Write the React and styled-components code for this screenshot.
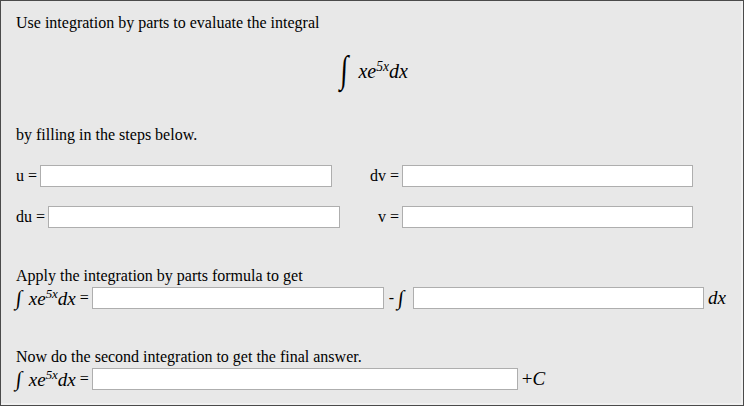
import React from "react";
import styled, { createGlobalStyle } from "styled-components";

const GlobalStyle = createGlobalStyle`
  html, body {
    margin: 0;
    padding: 0;
    background: #ffffff;
  }
  body {
    font-family: "Liberation Serif", "Times New Roman", serif;
    color: #000;
  }
`;

const Frame = styled.div`
  box-sizing: border-box;
  width: 744px;
  height: 406px;
  background: #e8e8e8;
  border: 1px solid #4a4a4a;
  box-shadow: inset -2px -2px 0 #f0f0f0;
  padding: 12px 0 0 15px;
  font-size: 16px;
`;

const Para = styled.div`
  line-height: 20px;
  margin-top: ${(p) => p.$top || 0}px;
`;

const Display = styled.div`
  display: flex;
  justify-content: center;
  align-items: center;
  gap: 9px;
  height: 44px;
  margin-top: 16px;
  padding-right: 12px;
`;

const BigIntegral = styled.span`
  font-size: 38px;
  line-height: 38px;
  display: inline-block;
  transform: scaleX(0.7) skewX(-4deg);
  margin-top: -4px;
`;

const Math = styled.span`
  font-style: italic;
  font-size: ${(p) => p.$size || 19}px;
  white-space: nowrap;
`;

const Sup = styled.sup`
  font-size: 0.68em;
  vertical-align: 0.55em;
  line-height: 0;
`;

const Grid = styled.div`
  display: flex;
  flex-direction: column;
  gap: 19px;
  margin-top: 20px;
`;

const Row = styled.div`
  display: flex;
  align-items: center;
`;

const Cell = styled.div`
  display: flex;
  align-items: center;
  width: ${(p) => p.$width}px;
  justify-content: ${(p) => (p.$right ? "flex-end" : "flex-start")};
`;

const Label = styled.span`
  margin-right: 3px;
  white-space: nowrap;
`;

const Field = styled.input`
  box-sizing: border-box;
  width: ${(p) => p.$width || 292}px;
  height: 22px;
  border: 1px solid #aeaeae;
  background: #fff;
  margin: 0;
  padding: 0 3px;
  font: inherit;
  outline: none;
`;

const Line = styled.div`
  display: flex;
  align-items: center;
  height: 22px;
  margin-top: ${(p) => p.$top || 0}px;
`;

const SmallIntegral = styled.span`
  font-style: normal;
  font-size: 21px;
  display: inline-block;
  transform: skewX(-6deg);
  margin-right: ${(p) => p.$gap ?? 7}px;
`;

const Sep = styled.span`
  margin: 0 5px 0 5px;
  white-space: nowrap;
  display: flex;
  align-items: center;
`;

const Tail = styled.span`
  margin-left: 4px;
  white-space: nowrap;
`;

function Expr() {
  return (
    <Math>
      <SmallIntegral>∫</SmallIntegral>xe<Sup>5x</Sup>dx
    </Math>
  );
}

export default function App() {
  return (
    <>
      <GlobalStyle />
      <Frame>
        <Para>Use integration by parts to evaluate the integral</Para>
        <Display>
          <BigIntegral>∫</BigIntegral>
          <Math $size={20}>
            xe<Sup>5x</Sup>dx
          </Math>
        </Display>
        <Para $top={32}>by filling in the steps below.</Para>
        <Grid>
          <Row>
            <Cell $width={354}>
              <Label>u =</Label>
              <Field />
            </Cell>
            <Cell $width={323} $right>
              <Label>dv =</Label>
              <Field $width={291} />
            </Cell>
          </Row>
          <Row>
            <Cell $width={354}>
              <Label>du =</Label>
              <Field />
            </Cell>
            <Cell $width={323} $right>
              <Label>v =</Label>
              <Field $width={291} />
            </Cell>
          </Row>
        </Grid>
        <Para $top={38}>Apply the integration by parts formula to get</Para>
        <Line $top={1}>
          <Expr />
          <Label>&nbsp;=</Label>
          <Field $width={292} />
          <Sep>
            -&nbsp;<SmallIntegral $gap={4}>∫</SmallIntegral>
          </Sep>
          <Field $width={291} />
          <Tail>
            <Math>dx</Math>
          </Tail>
        </Line>
        <Para $top={38}>Now do the second integration to get the final answer.</Para>
        <Line $top={1}>
          <Expr />
          <Label>&nbsp;=</Label>
          <Field $width={426} />
          <Tail>
            <Math>
              <span style={{ fontStyle: "normal" }}>+</span>C
            </Math>
          </Tail>
        </Line>
      </Frame>
    </>
  );
}
